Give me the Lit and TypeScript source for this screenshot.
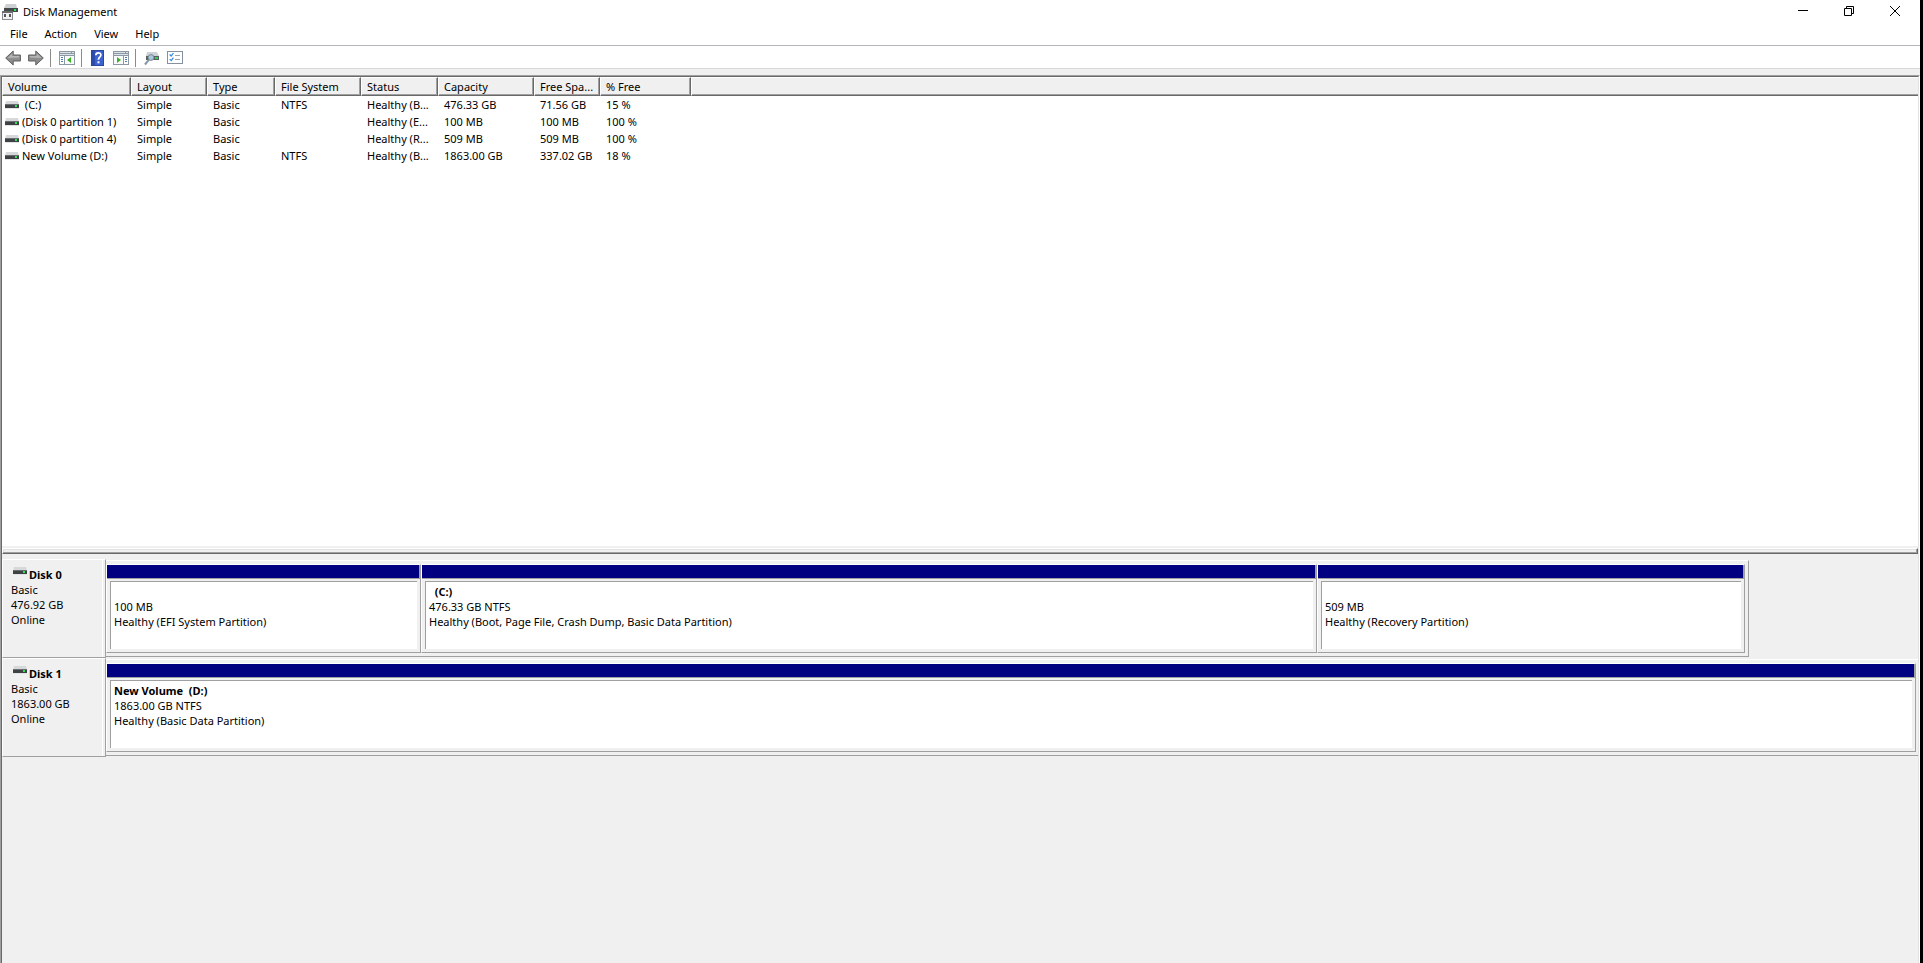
import { LitElement, html, css, svg, nothing } from "lit";
import { customElement, property } from "lit/decorators.js";

interface Volume {
  name: string;
  layout: string;
  type: string;
  fs: string;
  status: string;
  capacity: string;
  free: string;
  percent: string;
}

interface Partition {
  title: string;
  size: string;
  status: string;
  share: number;
}

interface Disk {
  name: string;
  kind: string;
  size: string;
  state: string;
  extent: number;
  partitions: Partition[];
}

const VOLUMES: Volume[] = [
  { name: "\u00a0(C:)", layout: "Simple", type: "Basic", fs: "NTFS", status: "Healthy (B...", capacity: "476.33 GB", free: "71.56 GB", percent: "15 %" },
  { name: "(Disk 0 partition 1)", layout: "Simple", type: "Basic", fs: "", status: "Healthy (E...", capacity: "100 MB", free: "100 MB", percent: "100 %" },
  { name: "(Disk 0 partition 4)", layout: "Simple", type: "Basic", fs: "", status: "Healthy (R...", capacity: "509 MB", free: "509 MB", percent: "100 %" },
  { name: "New Volume (D:)", layout: "Simple", type: "Basic", fs: "NTFS", status: "Healthy (B...", capacity: "1863.00 GB", free: "337.02 GB", percent: "18 %" },
];

const COLUMNS = [
  { label: "Volume", cls: "c-volume" },
  { label: "Layout", cls: "c-layout" },
  { label: "Type", cls: "c-type" },
  { label: "File System", cls: "c-fs" },
  { label: "Status", cls: "c-status" },
  { label: "Capacity", cls: "c-capacity" },
  { label: "Free Spa...", cls: "c-free" },
  { label: "% Free", cls: "c-percent" },
];

const DISKS: Disk[] = [
  {
    name: "Disk 0", kind: "Basic", size: "476.92 GB", state: "Online", extent: 90.67,
    partitions: [
      { title: "", size: "100 MB", status: "Healthy (EFI System Partition)", share: 19.22 },
      { title: "\u00a0\u00a0(C:)", size: "476.33 GB NTFS", status: "Healthy (Boot, Page File, Crash Dump, Basic Data Partition)", share: 54.67 },
      { title: "", size: "509 MB", status: "Healthy (Recovery Partition)", share: 26.11 },
    ],
  },
  {
    name: "Disk 1", kind: "Basic", size: "1863.00 GB", state: "Online", extent: 100,
    partitions: [
      { title: "New Volume\u00a0 (D:)", size: "1863.00 GB NTFS", status: "Healthy (Basic Data Partition)", share: 100 },
    ],
  },
];

const driveIcon = html`<svg class="drive" width="14" height="8" viewBox="0 0 14 8" aria-hidden="true">
  <path d="M1 0h12l1 4H0z" fill="#d6d8da" />
  <rect y="3" width="14" height="4" fill="#3f4245" />
  <rect y="3" width="14" height="1" fill="#6b6e70" />
  <rect y="7" width="14" height="1" fill="#e2e3e4" />
  <rect x="10" y="4" width="2" height="2" fill="#2fe05a" />
</svg>`;

const arrow = svg`<path d="M.7 8 8.200 1v4h7.200v6H8.200v4z" fill="#8d8d8d" stroke="#5f5f5f" stroke-width="1" stroke-linejoin="round" />
  <path d="M2.600 8 7.300 3.500V6h7v1.500z" fill="#b5b5b5" />`;

const consoleFrame = svg`<rect x="0" y="1" width="16" height="14" fill="#8c98a4" />
  <rect x="1" y="2" width="11" height="1" fill="#dbe2e8" /><rect x="13" y="2" width="2" height="1" fill="#dbe2e8" />
  <rect x="1" y="4" width="14" height="1" fill="#dbe2e8" />`;

const TOOL_ICONS: Record<string, unknown> = {
  back: svg`${arrow}`,
  forward: svg`<g transform="matrix(-1 0 0 1 16 0)">${arrow}</g>`,
  tree: svg`${consoleFrame}<rect x="1" y="6" width="4" height="8" fill="#fff" /><rect x="6" y="6" width="9" height="8" fill="#f7f9fa" />
    <path d="M2 7.500h2M2 9.500h2M2 11.500h2" stroke="#4a78a8" /><path d="M12 7v6L8 10z" fill="#3bb324" />`,
  pane: svg`${consoleFrame}<rect x="1" y="6" width="9" height="8" fill="#f7f9fa" /><rect x="11" y="6" width="4" height="8" fill="#fff" />
    <path d="M12 7.500h2M12 9.500h2M12 11.500h2" stroke="#4a78a8" /><path d="M4 7v6l4-3z" fill="#3bb324" />`,
  help: svg`<rect x="1.500" y=".5" width="12" height="15" fill="#3c62cf" stroke="#2a489f" /><rect x="2" y="1" width="3" height="14" fill="#2c4bab" />
    <path d="M5.800 5.300c.2-3.300 5.200-3.100 5.100-.2 0 2.100-2.500 2.100-2.500 4.600" fill="none" stroke="#fff" stroke-width="1.700" /><rect x="7.500" y="11.300" width="2" height="2" fill="#fff" />`,
  rescan: svg`<path d="M3 2h10l2 4H2z" fill="#ced2d5" /><rect x="2" y="6" width="13" height="4" fill="#5a5f63" /><rect x="11" y="7" width="3" height="2" fill="#2fd04c" />
    <path d="M4.800 9.800 1 14.500" stroke="#8797a5" stroke-width="2" /><circle cx="7" cy="7.500" r="2.900" fill="#aac8dc" stroke="#76899a" />`,
  props: svg`<rect x=".5" y="1.500" width="15" height="12" fill="#fff" stroke="#8492a0" />
    <path d="M2.700 4.500l1.500 1.500 2.200-3M2.700 9.200l1.500 1.500 2.200-3" fill="none" stroke="#2f8ae0" stroke-width="1.200" /><path d="M8 5.500h5M8 9.500h5" stroke="#9aa5af" />`,
};

@customElement("dm-disk-row")
class DiskRow extends LitElement {
  @property({ attribute: false }) disk!: Disk;

  static styles = css`
    :host { display: flex; height: 99px; line-height: 15px; }
    .label {
      flex: 0 0 104px; box-sizing: border-box; padding: 7px 3px 0 8px;
      border: 1px solid #a0a0a0; border-top-color: #fff; border-left-color: #fff;
      background: linear-gradient(#fff, #fff) right 2px top / 1px 100% no-repeat;
      cursor: default;
    }
    .name { display: flex; gap: 2px; margin: 0; font: inherit; font-weight: 700; padding-left: 2px; }
    .label p { margin: 0; }
    .track { flex: 1; min-width: 0; padding: 1px 0; display: flex; }
    .region {
      box-sizing: border-box; display: flex; min-width: 0;
      border-top: 1px solid #fff; border-bottom: 1px solid #a0a0a0;
      padding: 3px 2px 3px 0;
    }
    .region.partial { border-right: 1px solid #a0a0a0; padding-right: 3px; }
    .part {
      min-width: 0; box-sizing: border-box; display: flex; flex-direction: column;
      border: 1px solid #a0a0a0; border-top-color: #fff; border-left-color: #fff;
      padding: 0; font: inherit; color: inherit; background: #f0f0f0; text-align: left; border-radius: 0;
    }
    .bar {
      height: 13px; flex: none; align-self: stretch; background: #000080;
      border-right: 1px solid #a0a0a0; border-bottom: 1px solid #a0a0a0;
    }
    .body {
      flex: 1; align-self: stretch; margin: 2px 3px 3px; min-width: 0; overflow: hidden; background: #fff;
      border-top: 1px solid #a0a0a0; border-left: 1px solid #a0a0a0;
      padding: 2px 3px; white-space: nowrap; cursor: default;
    }
    .body span, .body b { display: block; min-height: 15px; }
    .drive { display: block; flex: none; }
  `;

  render() {
    const d = this.disk;
    return html`
      <section class="label">
        <h2 class="name">${driveIcon}<span>${d.name}</span></h2>
        <p>${d.kind}</p><p>${d.size}</p><p>${d.state}</p>
      </section>
      <div class="track">
        <div class="region ${d.extent < 100 ? "partial" : ""}" style="width:${d.extent}%">
          ${d.partitions.map((p) => html`<button class="part" style="width:${p.share}%">
            <span class="bar"></span>
            <span class="body"><b>${p.title}</b><span>${p.size}</span><span>${p.status}</span></span>
          </button>`)}
        </div>
      </div>`;
  }
}

@customElement("app-root")
class AppRoot extends LitElement {
  static styles = css`
    :host {
      display: flex; flex-direction: column; box-sizing: border-box; height: 100vh; overflow: hidden;
      border-right: 3px solid #000; background: #fff; color: #000;
      font: 11px/15px "Noto Sans", "Open Sans", sans-serif;
    }
    button { font: inherit; color: inherit; background: none; border: 0; padding: 0; margin: 0; }
    .titlebar { display: flex; align-items: center; height: 23px; flex: none; padding: 0 2px; }
    .titlebar h1 { flex: 1; margin: 0; padding-left: 5px; font: inherit; }
    .caption { width: 46px; height: 21px; display: grid; place-items: center; align-self: flex-start; }
    svg { display: block; flex: none; }
    .menu { display: flex; align-items: center; gap: 17px; height: 20px; padding: 0 10px 2px; flex: none; border-bottom: 1px solid #b4b4b9; }
    .tools { display: flex; align-items: center; height: 20px; flex: none; padding: 2px 5px 0; gap: 7px; border-bottom: 1px solid #d9d9d9; }
    .sep { width: 1px; height: 18px; background: #8c8c8c; margin: 0 1px 0 -1px; }
    .gap { height: 6px; flex: none; background: #f0f0f0; }
    .frame { flex: 1; min-height: 0; display: flex; border: solid; border-width: 1px 1px 0; border-color: #a0a0a0 #fff #a0a0a0 #a0a0a0; }
    .inner {
      flex: 1; min-width: 0; display: flex; flex-direction: column; background: #f0f0f0;
      border: solid; border-width: 1px 1px 0; border-color: #696969 #e3e3e3 #696969 #696969;
    }
    .list { flex: 469 1 0; min-height: 0; overflow: hidden; background: #fff; }
    table { width: 100%; border-collapse: separate; border-spacing: 0; table-layout: fixed; }
    th {
      box-sizing: border-box; height: 19px; padding: 0 0 0 5px; font-weight: 400; text-align: left; background: #f0f0f0;
      border: solid; border-width: 1px; border-color: #fff #696969 #696969 #fff;
      box-shadow: inset -1px -1px #a0a0a0; white-space: nowrap; overflow: hidden;
    }
    th.rest { border-right: 0; box-shadow: inset 0 -1px #a0a0a0; }
    td { height: 17px; padding: 0 0 0 6px; line-height: 17px; white-space: nowrap; overflow: hidden; }
    td:first-child { padding-left: 3px; }
    .vol { display: flex; align-items: center; gap: 3px; }
    .c-volume { width: 129px; } .c-layout { width: 76px; } .c-type { width: 68px; } .c-fs { width: 86px; }
    .c-status { width: 77px; } .c-capacity { width: 96px; } .c-free { width: 66px; } .c-percent { width: 91px; }
    .splitter {
      flex: none; box-sizing: border-box; height: 6px; margin: 2px 0 5px; border: 1px solid #696969;
      border-top-color: #fff; border-left-color: #fff; box-shadow: inset -1px -1px #a0a0a0, inset 1px 1px #e3e3e3;
    }
    .disks { flex: 404 1 0; min-height: 0; overflow: hidden; }
  `;

  private tool(icon: string, label: string) {
    return html`<button aria-label=${label} title=${label}><svg width="16" height="16" viewBox="0 0 16 16">${TOOL_ICONS[icon]}</svg></button>`;
  }

  render() {
    return html`
      <header class="titlebar">
        <svg width="16" height="16" viewBox="0 0 16 16" aria-hidden="true">
          <path d="M4 0h10l1 4H2z" fill="#cdd0d2" /><rect x="2" y="4" width="14" height="4" fill="#45484b" /><rect x="12" y="5" width="2" height="2" fill="#2fe05a" />
          <rect x="0" y="7" width="11" height="9" fill="#8b8e90" /><rect x="0" y="7" width="11" height="2" fill="#696c6f" /><rect x="1" y="9" width="9" height="6" fill="#f1f1f1" />
          <rect x="2" y="10" width="2" height="3" fill="#555" /><rect x="7" y="10" width="2" height="3" fill="#555" />
        </svg>
        <h1>Disk Management</h1>
        <button class="caption" aria-label="Minimize"><svg width="10" height="11" viewBox="0 0 10 11"><path d="M0 5.500h10" stroke="#000" /></svg></button>
        <button class="caption" aria-label="Restore"><svg width="10" height="10" viewBox="0 0 10 10" fill="none" stroke="#000"><path d="M.5 2.500h7v7h-7zM2.500 2.500v-2h7v7h-2" /></svg></button>
        <button class="caption" aria-label="Close"><svg width="10" height="10" viewBox="0 0 10 10"><path d="M0 0l10 10M10 0L0 10" stroke="#000" /></svg></button>
      </header>
      <nav class="menu">${["File", "Action", "View", "Help"].map((m) => html`<button>${m}</button>`)}</nav>
      <div class="tools" role="toolbar" aria-label="Tools">
        ${this.tool("back", "Back")}${this.tool("forward", "Forward")}<span class="sep"></span>
        ${this.tool("tree", "Show/Hide Console Tree")}<span class="sep"></span>
        ${this.tool("help", "Help")}${this.tool("pane", "Show/Hide Action Pane")}<span class="sep"></span>
        ${this.tool("rescan", "Rescan Disks")}${this.tool("props", "Settings")}
      </div>
      <div class="gap"></div>
      <main class="frame"><div class="inner">
        <div class="list">
          <table>
            <thead><tr>${COLUMNS.map((c) => html`<th class=${c.cls} scope="col">${c.label}</th>`)}<th class="rest"></th></tr></thead>
            <tbody>${VOLUMES.map((v) => html`<tr>
              <td><span class="vol">${driveIcon}<span>${v.name}</span></span></td>
              <td>${v.layout}</td><td>${v.type}</td><td>${v.fs || nothing}</td><td>${v.status}</td>
              <td>${v.capacity}</td><td>${v.free}</td><td>${v.percent}</td><td></td>
            </tr>`)}</tbody>
          </table>
        </div>
        <div class="splitter" role="separator"></div>
        <div class="disks">${DISKS.map((d) => html`<dm-disk-row .disk=${d}></dm-disk-row>`)}</div>
      </div></main>`;
  }
}
